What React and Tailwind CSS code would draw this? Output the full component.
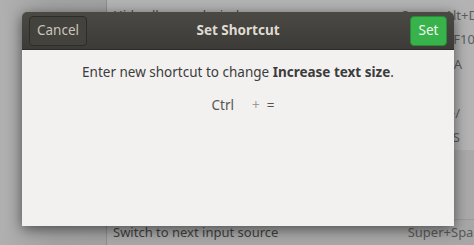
import React from 'react';

const App = () => {
  return (
    <div
      className="relative w-[474px] h-[245px] overflow-hidden bg-[#a3a3a3]"
      style={{ fontFamily: '"Noto Sans", "Open Sans", sans-serif' }}
    >
      {/* Dimmed settings window behind */}
      <div className="flex h-full">
        <aside className="w-[107px] shrink-0 border-r border-[#8c8c8c] bg-gradient-to-r from-[#b0b0b0] via-[#a2a2a2] to-[#a1a1a1]" />
        <div className="flex-1 flex flex-col bg-[#b3b3b3] text-[13px] text-[#4a4a4a]">
          <div className="h-[3px]" />
          <div className="h-[24.5px] flex items-center justify-between pl-[6px] w-[371px]">
            <span>Hide all normal windows</span>
            <span className="text-[#5c5c5c]">Super+Alt+D</span>
          </div>
          <div className="h-[24.5px] flex items-center justify-between pl-[6px] w-[368px]">
            <span>Maximise window</span>
            <span className="text-[#5c5c5c]">Alt+F10</span>
          </div>
          <div className="h-[24.5px] flex items-center justify-between pl-[6px] w-[355px]">
            <span>Show all applications</span>
            <span className="text-[#5c5c5c]">Super+A</span>
          </div>
          <div className="h-[24.5px] flex items-center justify-between pl-[6px] w-[345px]">
            <span>Switch applications</span>
            <span className="text-[#5c5c5c]">Super+Tab</span>
          </div>
          <div className="h-[24.5px] flex items-center justify-between pl-[6px] w-[353px]">
            <span>Show the overview</span>
            <span className="text-[#5c5c5c]">Super+/</span>
          </div>
          <div className="h-[24.5px] flex items-center justify-between pl-[6px] w-[353px]">
            <span>Show notification list</span>
            <span className="text-[#5c5c5c]">Super+S</span>
          </div>
          <div className="flex-1 bg-[#a9a9a9]" />
          <div className="h-[26px] shrink-0 flex items-center justify-between pl-[6px] w-[380px] border-t border-[#9a9a9a] bg-[#a7a7a7] text-[#3f3f3f]">
            <span>Switch to next input source</span>
            <span className="text-[#595959]">Super+Space</span>
          </div>
        </div>
      </div>

      {/* Dialog */}
      <div className="absolute left-[22px] top-[12px] w-[432px] h-[214px] flex flex-col rounded-t-[5px] overflow-hidden shadow-[0_3px_14px_rgba(0,0,0,0.55)]">
        <header className="h-[38px] shrink-0 flex items-center px-[7px] bg-gradient-to-b from-[#4b4944] to-[#3d3b37] border-b border-[#2f2d2a]">
          <div className="flex-1 flex">
            <button className="h-[30px] w-[58px] rounded-[4px] border border-[#2e2c29] bg-[#44423d] text-[13.5px] text-[#c9c5bc]">
              Cancel
            </button>
          </div>
          <h1 className="text-[13.5px] font-bold text-[#dfdbd2]">Set Shortcut</h1>
          <div className="flex-1 flex justify-end">
            <button className="h-[30px] w-[37px] rounded-[4px] border border-[#2a8a35] bg-[#38b24a] text-[13.5px] text-[#f2f8f0]">
              Set
            </button>
          </div>
        </header>
        <main className="flex-1 flex flex-col items-center bg-[#f2f1f0] pt-[12px]">
          <p className="text-[13.5px] text-[#3c3c3c]">
            Enter new shortcut to change <b className="font-bold">Increase text size</b>.
          </p>
          <div className="mt-[13px] pl-[10px] flex items-center text-[13.5px]">
            <span className="text-[#555]">Ctrl</span>
            <span className="ml-[18px] text-[#9a9a9a]">+</span>
            <span className="ml-[7px] text-[#555]">=</span>
          </div>
        </main>
      </div>
    </div>
  );
};

export default App;
